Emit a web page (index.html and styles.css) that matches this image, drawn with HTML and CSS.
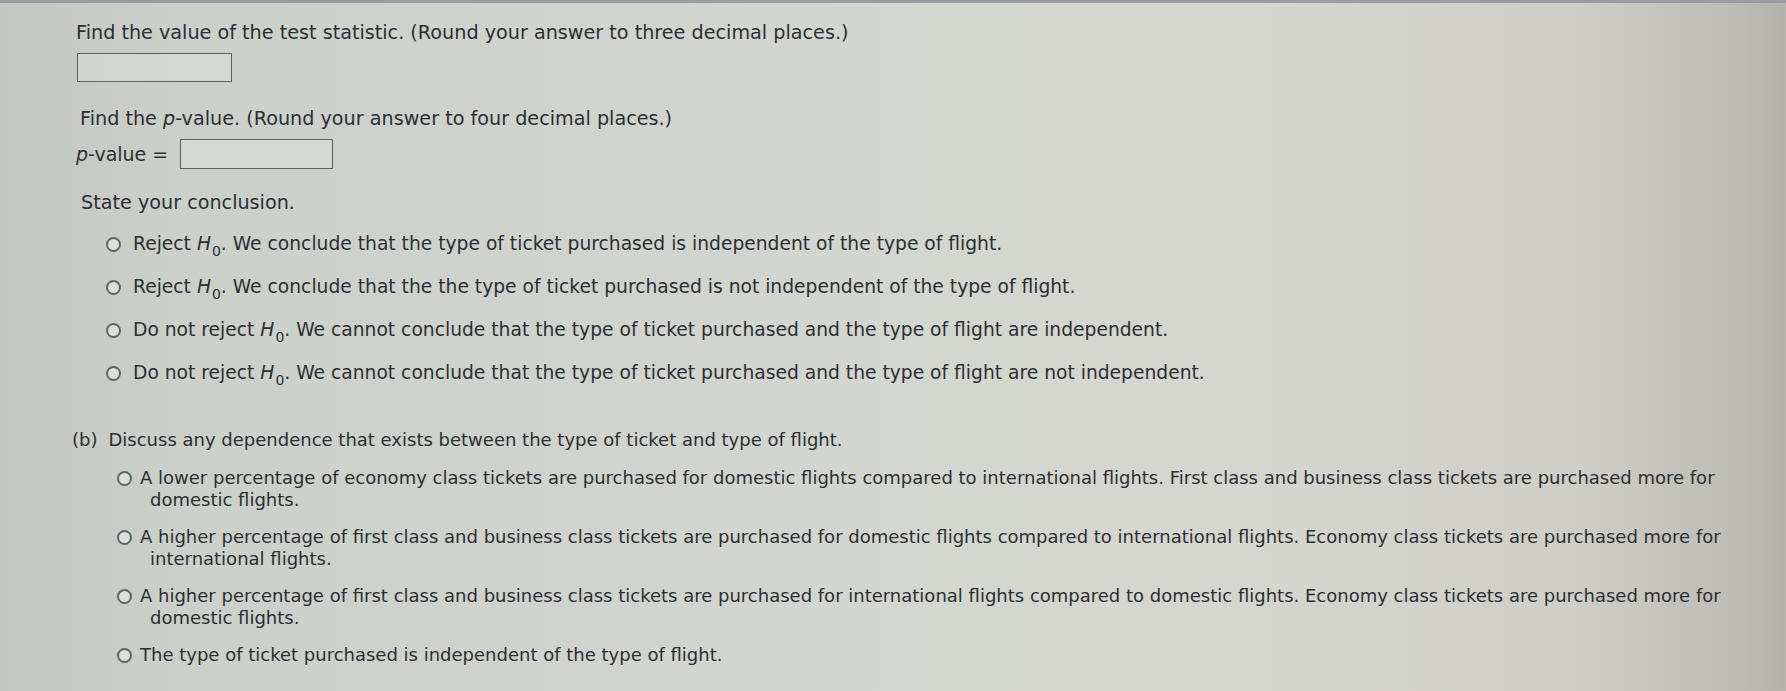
FILE: index.html
```html
<!DOCTYPE html>
<html>
<head>
<meta charset="utf-8">
<link rel="stylesheet" href="styles.css">
</head>
<body>
<div class="page">
  <div class="part-a">
    <p class="q q1">Find the value of the test statistic. (Round your answer to three decimal places.)</p>
    <div class="box box1"></div>
    <p class="q q2">Find the <i>p</i>-value. (Round your answer to four decimal places.)</p>
    <div class="pv-row"><span><i>p</i>-value =</span><div class="box box2"></div></div>
    <p class="q q3">State your conclusion.</p>
    <ul class="opts opts-a">
      <li><span class="radio"></span><span>Reject <i>H</i><sub>0</sub>. We conclude that the type of ticket purchased is independent of the type of flight.</span></li>
      <li><span class="radio"></span><span>Reject <i>H</i><sub>0</sub>. We conclude that the the type of ticket purchased is not independent of the type of flight.</span></li>
      <li><span class="radio"></span><span>Do not reject <i>H</i><sub>0</sub>. We cannot conclude that the type of ticket purchased and the type of flight are independent.</span></li>
      <li><span class="radio"></span><span>Do not reject <i>H</i><sub>0</sub>. We cannot conclude that the type of ticket purchased and the type of flight are not independent.</span></li>
    </ul>
  </div>
  <div class="part-b">
    <div class="b-head"><span class="label">(b)</span><span>Discuss any dependence that exists between the type of ticket and type of flight.</span></div>
    <ul class="opts opts-b">
      <li><span class="radio"></span><span class="txt">A lower percentage of economy class tickets are purchased for domestic flights compared to international flights. First class and business class tickets are purchased more for domestic flights.</span></li>
      <li><span class="radio"></span><span class="txt">A higher percentage of first class and business class tickets are purchased for domestic flights compared to international flights. Economy class tickets are purchased more for international flights.</span></li>
      <li><span class="radio"></span><span class="txt">A higher percentage of first class and business class tickets are purchased for international flights compared to domestic flights. Economy class tickets are purchased more for domestic flights.</span></li>
      <li><span class="radio"></span><span class="txt">The type of ticket purchased is independent of the type of flight.</span></li>
    </ul>
  </div>
</div>
</body>
</html>
```
FILE: styles.css
```css
html, body {
  margin: 0;
  padding: 0;
}
body {
  width: 1786px;
  height: 691px;
  overflow: hidden;
  font-family: "DejaVu Sans", Verdana, sans-serif;
  font-size: 19px;
  color: #2c2f33;
  background: linear-gradient(90deg, #c4c7c1 0%, #ccd0ca 10%, #d3d6d0 45%, #d6d6d0 70%, #cfcfc8 88%, #bdbcb5 97%, #b3b2ab 100%);
  border-top: 3px solid #9a9ca3;
  box-sizing: border-box;
}
.page {
  padding: 18px 0 0 76px;
}
p { margin: 0; }
.q { line-height: 24px; font-size: 19.2px; }
.q2 { margin-left: 4px; margin-top: 25px; }
.q3 { margin-left: 5px; margin-top: 22px; }
.box {
  border: 1px solid #5c5f62;
  background: rgba(230, 232, 228, 0.35);
  box-sizing: border-box;
}
.box1 {
  width: 155px;
  height: 29px;
  margin: 8px 0 0 1px;
}
.pv-row {
  display: flex;
  align-items: center;
  gap: 12px;
  margin-top: 8px;
}
.box2 {
  width: 153px;
  height: 30px;
}
.opts {
  list-style: none;
  margin: 0;
  padding: 0;
}
.opts li {
  display: flex;
  align-items: flex-start;
  gap: 12px;
  line-height: 24px;
}
.radio {
  flex: none;
  width: 15px;
  height: 15px;
  border: 2px solid #616467;
  border-radius: 50%;
  margin-top: 5px;
  background: #dcdfda;
  box-sizing: border-box;
}
sub {
  font-size: 14px;
  vertical-align: -6px;
  line-height: 0;
  margin-left: 1px;
}
.opts-a {
  margin: 17px 0 0 30px;
  display: flex;
  flex-direction: column;
  gap: 19px;
  font-size: 18.7px;
}
.part-b {
  margin: 43px 0 0 -4px;
  font-size: 18px;
}
.b-head {
  display: flex;
  gap: 11px;
  line-height: 24px;
}
.opts-b {
  margin: 15px 0 0 45px;
  display: flex;
  flex-direction: column;
  gap: 15px;
  width: 1630px;
}
.opts-b li {
  line-height: 22px;
  gap: 8px;
}
.opts-b .radio {
  margin-top: 4px;
}
.opts-b .txt {
  padding-left: 10px;
  text-indent: -10px;
}
```
